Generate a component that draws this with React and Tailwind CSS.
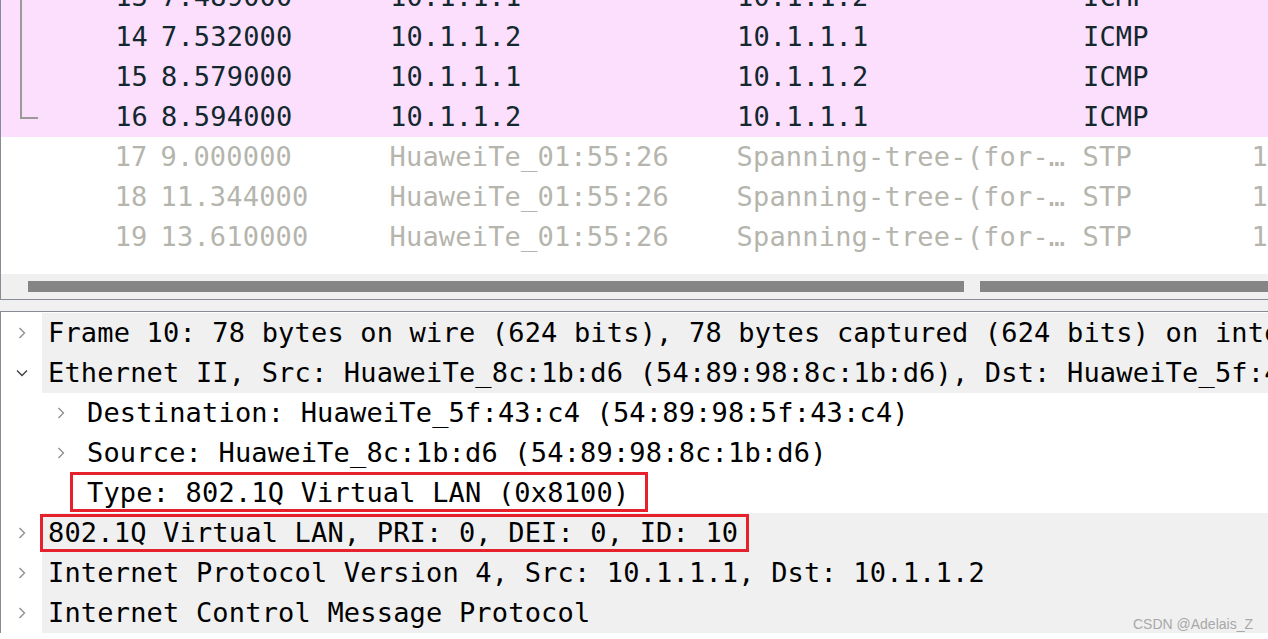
import React from 'react';

const mono = { fontFamily: '"DejaVu Sans Mono", "Liberation Mono", monospace' };

const packets = [
  { no: 13, time: '7.489000', src: '10.1.1.1', dst: '10.1.1.2', proto: 'ICMP', len: '', line: 'mid', hot: true },
  { no: 14, time: '7.532000', src: '10.1.1.2', dst: '10.1.1.1', proto: 'ICMP', len: '', line: 'mid', hot: true },
  { no: 15, time: '8.579000', src: '10.1.1.1', dst: '10.1.1.2', proto: 'ICMP', len: '', line: 'mid', hot: true },
  { no: 16, time: '8.594000', src: '10.1.1.2', dst: '10.1.1.1', proto: 'ICMP', len: '', line: 'end', hot: true },
  { no: 17, time: '9.000000', src: 'HuaweiTe_01:55:26', dst: 'Spanning-tree-(for-…', proto: 'STP', len: '1' },
  { no: 18, time: '11.344000', src: 'HuaweiTe_01:55:26', dst: 'Spanning-tree-(for-…', proto: 'STP', len: '1' },
  { no: 19, time: '13.610000', src: 'HuaweiTe_01:55:26', dst: 'Spanning-tree-(for-…', proto: 'STP', len: '1' },
];

const RelLine = ({ kind }) => {
  if (!kind) return <div className="w-[20px] h-[40px]" />;
  return (
    <svg width="20" height="40" className="shrink-0">
      {kind === 'mid' ? (
        <line x1="1" y1="0" x2="1" y2="40" stroke="#9a9a9a" strokeWidth="2" />
      ) : (
        <polyline points="1,0 1,21 18,21" fill="none" stroke="#9a9a9a" strokeWidth="2" />
      )}
    </svg>
  );
};

const PacketRow = ({ p }) => (
  <div
    className={`flex items-center h-[40px] whitespace-nowrap ${p.hot ? 'bg-[#fbdffc] text-[#12272e]' : 'bg-white text-[#b5b5ad]'}`}
  >
    <div className="w-[19px] shrink-0" />
    <RelLine kind={p.line} />
    <div className="w-[108px] shrink-0 text-right">{p.no}</div>
    <div className="w-[13px] shrink-0" />
    <div className="w-[229px] shrink-0">{p.time}</div>
    <div className="w-[347px] shrink-0">{p.src}</div>
    <div className="w-[346px] shrink-0">{p.dst}</div>
    <div className="w-[169px] shrink-0">{p.proto}</div>
    <div className="flex-1">{p.len}</div>
  </div>
);

const ChevRight = () => (
  <svg width="8" height="12" viewBox="0 0 8 12">
    <polyline points="1.5,1 6.5,6 1.5,11" fill="none" stroke="#8c8c8c" strokeWidth="1.3" />
  </svg>
);

const ChevDown = () => (
  <svg width="12" height="8" viewBox="0 0 12 8">
    <polyline points="1,1.5 6,6.5 11,1.5" fill="none" stroke="#3c3c3c" strokeWidth="1.3" />
  </svg>
);

const DetailRow = ({ level = 0, open, leaf, shaded, children, box }) => (
  <div className="flex items-stretch h-[40px] whitespace-nowrap relative">
    <div className={level ? 'w-[39px] shrink-0' : 'w-0'} />
    <div className="w-[41px] shrink-0 flex items-center justify-center">
      {leaf ? null : open ? <ChevDown /> : <ChevRight />}
    </div>
    <div className={`flex-1 flex items-center pl-[6px] relative ${shaded ? 'bg-[#f0f0f0]' : ''}`}>
      {children}
      {box}
    </div>
  </div>
);

export default function App() {
  return (
    <div className="w-[1268px] h-[639px] overflow-hidden bg-white text-[27px] tracking-[0.18px]" style={mono}>
      {/* packet list */}
      <div className="h-[300px] border-l border-b border-[#868b96] bg-white flex flex-col overflow-hidden">
        <div className="-mt-[23px]">
          {packets.map((p) => (
            <PacketRow key={p.no} p={p} />
          ))}
        </div>
        <div className="flex-1" />
        <div className="h-[25px] bg-[#f0f0f0] flex items-center pl-[27px] gap-[16px]">
          <div className="w-[936px] h-[11px] bg-[#858585]" />
          <div className="flex-1 h-[11px] bg-[#858585]" />
        </div>
      </div>

      {/* splitter */}
      <div className="h-[11px] bg-[#f0f0f0]" />

      {/* packet details */}
      <div className="border-l border-t border-[#868b96] pt-[1px] text-black">
        <DetailRow shaded>Frame 10: 78 bytes on wire (624 bits), 78 bytes captured (624 bits) on interface 0</DetailRow>
        <DetailRow shaded open>Ethernet II, Src: HuaweiTe_8c:1b:d6 (54:89:98:8c:1b:d6), Dst: HuaweiTe_5f:43:c4 (54:89:98:5f:43:c4)</DetailRow>
        <DetailRow level={1}>Destination: HuaweiTe_5f:43:c4 (54:89:98:5f:43:c4)</DetailRow>
        <DetailRow level={1}>Source: HuaweiTe_8c:1b:d6 (54:89:98:8c:1b:d6)</DetailRow>
        <DetailRow
          level={1}
          leaf
          box={<div className="absolute left-[-11px] top-[-1px] w-[578px] h-[40px] border-[3px] border-[#e5212d] pointer-events-none" />}
        >
          Type: 802.1Q Virtual LAN (0x8100)
        </DetailRow>
        <DetailRow
          shaded
          box={<div className="absolute left-[-2px] top-[1px] w-[709px] h-[38px] border-[3px] border-[#e5212d] pointer-events-none" />}
        >
          802.1Q Virtual LAN, PRI: 0, DEI: 0, ID: 10
        </DetailRow>
        <DetailRow shaded>Internet Protocol Version 4, Src: 10.1.1.1, Dst: 10.1.1.2</DetailRow>
        <div className="relative">
          <DetailRow shaded>Internet Control Message Protocol</DetailRow>
          <div
            className="absolute right-[15px] top-[21px] text-[14px] tracking-normal text-[#a8a8a8]"
            style={{ fontFamily: '"Liberation Sans", Arial, sans-serif' }}
          >
            CSDN @Adelais_Z
          </div>
        </div>
      </div>
    </div>
  );
}
